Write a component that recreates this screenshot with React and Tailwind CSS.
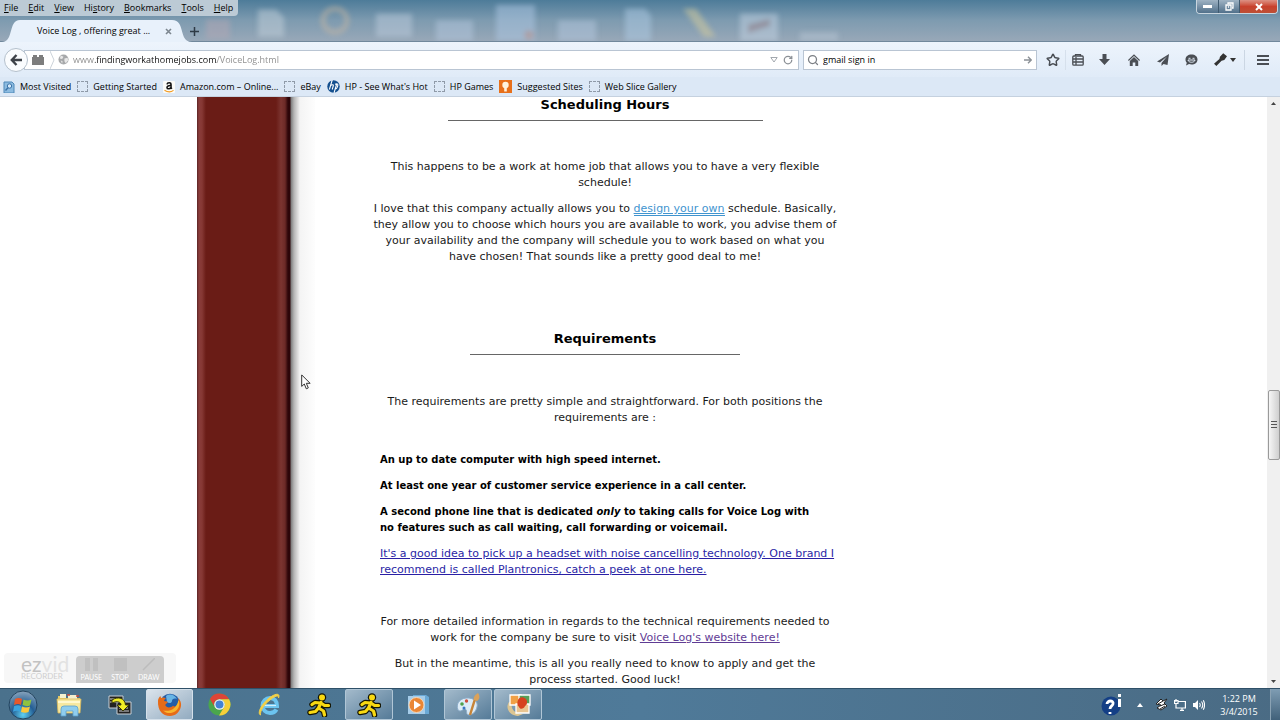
import React, { useState } from 'react';
import { Search, RotateCw, Star } from 'lucide-react';

const MENUS = [
  ['', 'F', 'ile'],
  ['', 'E', 'dit'],
  ['', 'V', 'iew'],
  ['Hi', 's', 'tory'],
  ['', 'B', 'ookmarks'],
  ['', 'T', 'ools'],
  ['', 'H', 'elp'],
];

function BlankIcon() {
  return <span className="w-[11px] h-[11px] shrink-0 border border-dashed border-[#8f9aa8]" />;
}

function VisitedIcon() {
  return (
    <svg className="w-3 h-3 shrink-0" viewBox="0 0 12 12">
      <path d="M1 1h8l2 2v9H1z" fill="#8cbbe0" stroke="#4f88b8" strokeWidth="1" />
      <circle cx="6.5" cy="5" r="2.2" fill="#d6eafa" stroke="#3a72a8" />
      <path d="M5 6.8 2.5 9.5" stroke="#3a72a8" strokeWidth="1.4" />
    </svg>
  );
}

function AmazonIcon() {
  return (
    <svg className="w-3 h-3 shrink-0" viewBox="0 0 12 12">
      <rect width="12" height="12" rx="1" fill="#fbfbf8" />
      <path d="M4 3.4C4.4 1.2 8 1.2 8 3.4v3.4l.9 1M8 4.6C5.6 4.4 4 5 4 6.4c0 1.8 3 1.9 4-.1" fill="none" stroke="#111" strokeWidth="1.6" />
      <path d="M1.5 9.2c3 2 6.5 2 9 .2" fill="none" stroke="#f29a1f" strokeWidth="1.1" />
    </svg>
  );
}

function HpIcon() {
  return (
    <svg className="w-[13px] h-[13px] shrink-0" viewBox="0 0 13 13">
      <circle cx="6.5" cy="6.5" r="6.2" fill="#14508f" />
      <path d="M5.2 0 2.4 9.5M4 5.2c2-1 2.6-.4 2.2 1L5.2 9.5M9.8 3.6 7 13M8 4.2c2.8-.8 3.3-.2 2.5 2.4-.6 2.2-1 2.6-2.8 2.2" fill="none" stroke="#fff" strokeWidth="1.1" />
    </svg>
  );
}

function SuggestedIcon() {
  return (
    <svg className="w-[13px] h-[13px] shrink-0" viewBox="0 0 13 13">
      <rect width="13" height="13" fill="#e8701a" />
      <circle cx="6.5" cy="5" r="3.2" fill="#fff3dc" />
      <path d="M5.2 7h2.6v4.5H5.2z" fill="#fff3dc" />
    </svg>
  );
}

const BOOKMARKS = [
  ['Most Visited', VisitedIcon],
  ['Getting Started', BlankIcon],
  ['Amazon.com – Online...', AmazonIcon],
  ['eBay', BlankIcon],
  ["HP - See What's Hot", HpIcon],
  ['HP Games', BlankIcon],
  ['Suggested Sites', SuggestedIcon],
  ['Web Slice Gallery', BlankIcon],
];

// Desktop icons showing through the glass title bar
function GlassBackdrop() {
  return (
    <svg className="absolute inset-0 w-full h-full" viewBox="0 0 1280 42" preserveAspectRatio="none" aria-hidden="true">
      <defs>
        <filter id="soft" x="-20%" y="-20%" width="140%" height="140%">
          <feGaussianBlur stdDeviation="2.5" />
        </filter>
      </defs>
      <g filter="url(#soft)" opacity="0.5">
        <path d="M206 20h24v20h-24z" fill="#b3a7b4" />
        <path d="M258 10h18l8 8v20h-26z" fill="#c3d0da" />
        <circle cx="335" cy="21" r="12" fill="none" stroke="#c9b7a2" strokeWidth="5" />
        <path d="M376 14h36v24h-36z" fill="#bccbdc" />
        <path d="M436 21h37v21h-37z" fill="#b4c7de" />
        <path d="M496 5h39v37h-39z" fill="#aec8e4" />
        <circle cx="529" cy="36" r="5" fill="#c69c98" />
        <path d="M558 21h38v21h-38z" fill="#b4c7de" />
        <path d="M625 9h20l6 7v26h-26z" fill="#aecbe4" />
        <path d="M683 9 696 9 716 38 704 38z" fill="#d6cc9c" />
        <path d="M740 14h38v28h-38z" fill="#c2d2e2" />
        <path d="M748 25 770 19v8l-22 7z" fill="#a58c94" />
        <path d="M800 33h38v9h-38z" fill="#b7c6d4" />
      </g>
    </svg>
  );
}

function TitleBar() {
  return (
    <header className="relative h-[42px] shrink-0 border-b border-[#71889c] bg-linear-to-b from-[#4d7c99] via-[#7e9bb0] to-[#98a8b8]">
      <GlassBackdrop />
      <div className="relative flex justify-between items-start">
        <nav className="flex h-4 w-[238px] items-center gap-[10px] pl-1 rounded-br bg-[#bccad5] text-[9px] text-black">
          {MENUS.map(([before, key, after]) => (
            <button key={before + key + after} type="button" className="whitespace-nowrap">
              {before}<u>{key}</u>{after}
            </button>
          ))}
        </nav>
        <div className="flex mr-[2px] h-[14px] rounded-b border border-t-0 border-[#c9d5de] overflow-hidden">
          <button type="button" aria-label="Minimize" className="w-[22px] flex items-center justify-center bg-linear-to-b from-[#9fb3c4] to-[#52718b] border-r border-[#3f5a70]">
            <span className="w-[9px] h-[3px] bg-white" />
          </button>
          <button type="button" aria-label="Restore" className="w-[21px] flex items-center justify-center bg-linear-to-b from-[#9fb3c4] to-[#52718b] border-r border-[#3f5a70]">
            <svg className="w-[9px] h-[9px]" viewBox="0 0 9 9" fill="none" stroke="#fff" strokeWidth="1.3">
              <path d="M3 2V1h5v5H7M1 3h5v5H1zM3 5h1" />
            </svg>
          </button>
          <button type="button" aria-label="Close window" className="w-[37px] flex items-center justify-center bg-linear-to-b from-[#dc9184] via-[#c8412d] to-[#bd4f35]">
            <svg className="w-2 h-2" viewBox="0 0 8 8" stroke="#fff" strokeWidth="2">
              <path d="m1 1 6 6M7 1 1 7" />
            </svg>
          </button>
        </div>
      </div>
      <div className="relative flex h-[22px] mt-[4px] items-center">
        <svg className="absolute left-0 top-0 w-[194px] h-[22px]" viewBox="0 0 194 22" aria-hidden="true">
          <path d="M2 22C14 22 8 0 20 0H172C186 0 178 22 192 22z" fill="#e8f1fb" />
        </svg>
        <div className="relative flex w-[184px] items-center justify-between pl-[37px] pr-3">
          <span className="text-[9px] text-black whitespace-nowrap">Voice Log , offering great ...</span>
          <button type="button" aria-label="Close tab" className="flex">
            <svg className="w-[7px] h-[7px]" viewBox="0 0 7 7" stroke="#7c868f" strokeWidth="1.6">
              <path d="m1 1 5 5M6 1 1 6" />
            </svg>
          </button>
        </div>
        <button type="button" aria-label="New tab" className="relative flex ml-[6px]">
          <svg className="w-[9px] h-[9px]" viewBox="0 0 9 9" stroke="#2e3a45" strokeWidth="1.5">
            <path d="M4.5 0v9M0 4.5h9" />
          </svg>
        </button>
      </div>
    </header>
  );
}

function ToolButton({ label, children, className }) {
  return (
    <button type="button" aria-label={label} className={`flex items-center justify-center h-5 text-[#4a4e54] ${className}`}>
      {children}
    </button>
  );
}

function NavBar() {
  const [url, setUrl] = useState('www.findingworkathomejobs.com/VoiceLog.html');
  const [query, setQuery] = useState('gmail sign in');

  return (
    <div className="flex h-[35px] shrink-0 items-center pl-1 pr-[11px] bg-linear-to-b from-[#edf4fc] to-[#e0ebf8]">
      <button type="button" aria-label="Back" className="relative z-10 flex w-6 h-6 shrink-0 items-center justify-center rounded-full border border-[#b4c0cc] bg-[#fafcfe]">
        <svg className="w-3 h-3" viewBox="0 0 12 12" fill="none" stroke="#3d4248" strokeWidth="2.4">
          <path d="M6.5 1 1.8 6l4.7 5M2 6h10" />
        </svg>
      </button>
      <div className="-ml-1 flex h-5 flex-1 items-center border border-[#b9c5d3] bg-white">
        <span className="flex h-full w-[25px] items-center pl-[7px]">
          <svg className="w-3 h-[10px]" viewBox="0 0 12 10" fill="#7d7d7d">
            <path d="M0 2h1V0h4v2h2V0h4v2h1v8H0z" />
          </svg>
        </span>
        <svg className="h-full w-[5px]" viewBox="0 0 5 18" fill="none" stroke="#ccd3da">
          <path d="m0 0 4 9-4 9" />
        </svg>
        <svg className="w-[11px] h-[11px] ml-[3px]" viewBox="0 0 12 12">
          <circle cx="6" cy="6" r="5.5" fill="#a6a8aa" />
          <path d="M3 1.5 6 3 4.5 5.5 2 5zM7 5l3.5-1 .5 3-2.5 3L7 8zM3 7l2 1-.5 2.5z" fill="#e8e8e8" />
        </svg>
        <input
          type="text"
          aria-label="Address"
          value={url}
          onChange={(e) => setUrl(e.target.value)}
          className="ml-[4px] min-w-0 flex-1 h-full text-[9px] bg-clip-text text-transparent caret-black focus:outline-none
                     bg-[linear-gradient(90deg,#8c8c8c_22px,#111_22px,#111_144px,#8c8c8c_144px)]"
        />
        <ToolButton label="Show history" className="w-4">
          <svg className="w-2 h-[6px]" viewBox="0 0 8 6" fill="none" stroke="#a2a8ae">
            <path d="M.8.5h6.4L4 5z" />
          </svg>
        </ToolButton>
        <ToolButton label="Reload" className="w-3 mr-1">
          <RotateCw className="w-[10px] h-[10px] text-[#8b9096]" strokeWidth={3} />
        </ToolButton>
      </div>
      <div className="ml-1 flex h-5 w-[234px] items-center border border-[#b9c5d3] bg-white">
        <Search className="w-3 h-3 ml-[3px] text-[#7b7f84]" strokeWidth={2.5} />
        <input
          type="text"
          aria-label="Search"
          value={query}
          onChange={(e) => setQuery(e.target.value)}
          className="ml-1 min-w-0 flex-1 h-full text-[9px] text-black focus:outline-none"
        />
        <ToolButton label="Go" className="w-4">
          <svg className="w-2 h-2" viewBox="0 0 8 8" fill="none" stroke="#8b9096" strokeWidth="1.4">
            <path d="M0 4h7M4 .8 7.2 4 4 7.2" />
          </svg>
        </ToolButton>
      </div>
      <div className="ml-1 flex items-center">
        <ToolButton label="Bookmark this page" className="w-[25px] border-r border-[#d6e0ec]">
          <Star className="w-[14px] h-[14px]" strokeWidth={2.5} />
        </ToolButton>
        <ToolButton label="Bookmarks list" className="w-6">
          <svg className="w-3 h-3" viewBox="0 0 12 12" fill="none" stroke="currentColor" strokeWidth="1.3">
            <rect x=".8" y="2" width="10.4" height="9.2" rx="1" />
            <path d="M3.5 2V.7h5V2M1 5h10M1 8h10M4 3v8" />
          </svg>
        </ToolButton>
        <ToolButton label="Downloads" className="w-[29px]">
          <svg className="w-[11px] h-3" viewBox="0 0 11 12" fill="currentColor">
            <path d="M3.5 0h4v5H11l-5.5 6L0 5h3.5z" />
          </svg>
        </ToolButton>
        <ToolButton label="Home" className="w-[29px]">
          <svg className="w-3 h-3" viewBox="0 0 12 12" fill="currentColor">
            <path d="M6 .3 12 6l-.8.9L6 2 .8 6.9 0 6z" />
            <path d="M6 3 10.2 7v5H7.3V8.5H4.7V12H1.8V7z" />
          </svg>
        </ToolButton>
        <ToolButton label="Share" className="w-[29px]">
          <svg className="w-3 h-3" viewBox="0 0 12 12" fill="currentColor">
            <path d="M12 0 0 7.5l3 1L10 2.5 4.5 9v3l2-2 4 1z" />
          </svg>
        </ToolButton>
        <ToolButton label="Chat" className="w-[29px]">
          <svg className="w-[13px] h-3" viewBox="0 0 13 12">
            <path d="M6.5.5c3.5 0 6 2 6 5s-2.500 5-6 5c-1 0-1.700-.1-2.500-.4L1 11.500l.8-2.800C.9 7.800.5 6.800.5 5.500c0-3 2.500-5 6-5z" fill="currentColor" />
            <path d="M3 6h7c-.3 3-6.700 3-7 0zM3.500 4.300h2M7.500 4.300h2" fill="none" stroke="#e3edf8" />
          </svg>
        </ToolButton>
        <ToolButton label="Tools" className="w-[38px] gap-[3px]">
          <svg className="w-[13px] h-[13px]" viewBox="0 0 12 12" fill="#333">
            <path d="m5.5 3.500 3-3.300L12 3 9.500 6.500 7 7.200 2.200 12 0 10 5 5.500z" />
          </svg>
          <svg className="w-[6px] h-[4px]" viewBox="0 0 6 4" fill="#333"><path d="M0 0h6L3 4z" /></svg>
        </ToolButton>
        <ToolButton label="Open menu" className="w-[25px] justify-end border-l border-[#cbd6e3]">
          <svg className="w-3 h-3" viewBox="0 0 12 12" stroke="currentColor" strokeWidth="2">
            <path d="M0 2h12M0 6h12M0 10h12" />
          </svg>
        </ToolButton>
      </div>
    </div>
  );
}

function BookmarksBar() {
  return (
    <nav className="flex h-5 shrink-0 items-center gap-[6px] pl-[3px] border-b border-[#c5d1df] bg-[#dce8f6] text-[9px] text-black">
      {BOOKMARKS.map(([label, Icon]) => (
        <a key={label} href="#" className="flex items-center gap-[5px] whitespace-nowrap">
          <Icon />
          {label}
        </a>
      ))}
    </nav>
  );
}

function Article() {
  return (
    <article className="w-[466px] shrink-0 text-[11px] leading-4 text-[#1a1a1a] text-center font-['DejaVu_Sans',Verdana,sans-serif]">
      <h2 className="text-[13px] leading-4 font-bold text-black">Scheduling Hours</h2>
      <hr className="mt-[7px] mx-auto w-[315px] border-[#666]" />
      <div className="mt-[38px] space-y-[10px]">
        <p>This happens to be a work at home job that allows you to have a very flexible schedule!</p>
        <p>
          I love that this company actually allows you to{' '}
          <a href="#" className="text-[#3f94cf] underline border-b border-[#3f94cf]">design your own</a>{' '}
          schedule. Basically, they allow you to choose which hours you are available to work, you advise them of
          your availability and the company will schedule you to work based on what you have chosen! That sounds
          like a pretty good deal to me!
        </p>
      </div>

      <h2 className="mt-[66px] text-[13px] leading-4 font-bold text-black">Requirements</h2>
      <hr className="mt-[7px] mx-auto w-[270px] border-[#666]" />
      <p className="mt-[39px]">
        The requirements are pretty simple and straightforward. For both positions the requirements are :
      </p>
      <div className="mt-[26px] pl-2 space-y-[10px] text-left text-black">
        <div className="space-y-[10px] pr-5 text-[10px] leading-4 font-bold">
          <p>An up to date computer with high speed internet.</p>
          <p>At least one year of customer service experience in a call center.</p>
          <p>
            A second phone line that is dedicated <em>only</em> to taking calls for Voice Log with no features such
            as call waiting, call forwarding or voicemail.
          </p>
        </div>
        <p>
          <a href="#" className="text-[#2a1fa5] underline">
            It&apos;s a good idea to pick up a headset with noise cancelling technology. One brand I recommend is
            called Plantronics, catch a peek at one here.
          </a>
        </p>
      </div>
      <div className="mt-[36px] space-y-[10px]">
        <p>
          For more detailed information in regards to the technical requirements needed to work for the company be
          sure to visit <a href="#" className="text-[#5f3c94] underline">Voice Log&apos;s website here!</a>
        </p>
        <p>But in the meantime, this is all you really need to know to apply and get the process started. Good luck!</p>
      </div>
    </article>
  );
}

function Recorder() {
  return (
    <div className="absolute left-1 bottom-[5px] flex h-[30px] w-[172px] rounded bg-[#f7f7f7] pl-[17px] font-[Lato,sans-serif]">
      <div className="w-[55px] pt-[3px] leading-none">
        <div className="text-[21px] leading-[16px] text-[#c2c2c2]">ez<span className="text-[#e2e2e2]">vid</span></div>
        <div className="text-[8px] leading-[8px] text-[#cfcfcf]">RECORDER</div>
      </div>
      <div className="mt-[3px] flex w-[88px] justify-around rounded-t bg-[#cdcdcd] text-[7px] leading-[8px] text-white">
        <button type="button" className="flex flex-col items-center gap-[2px] pt-[2px]">
          <svg className="w-[13px] h-[13px]" viewBox="0 0 13 13" fill="#c0c0c0"><path d="M0 0h5v13H0zM8 0h5v13H8z" /></svg>
          PAUSE
        </button>
        <button type="button" className="flex flex-col items-center gap-[2px] pt-[2px]">
          <svg className="w-[13px] h-[13px]" viewBox="0 0 13 13" fill="#c0c0c0"><path d="M0 0h13v13H0z" /></svg>
          STOP
        </button>
        <button type="button" className="flex flex-col items-center gap-[2px] pt-[2px]">
          <svg className="w-[13px] h-[13px]" viewBox="0 0 13 13" stroke="#bcbcbc" strokeWidth="1.5"><path d="M13 0 1 12" /></svg>
          DRAW
        </button>
      </div>
    </div>
  );
}

function Scrollbar() {
  return (
    <div className="flex w-[13px] shrink-0 flex-col items-center justify-between bg-[#f0f0f0] py-[5px]">
      <svg className="w-[5px] h-[3px]" viewBox="0 0 5 3" fill="#444"><path d="M0 3h5L2.5 0z" /></svg>
      <div className="mt-16 flex h-[70px] w-3 items-center justify-center rounded-xs border border-[#9a9a9a] bg-linear-to-r from-[#f6f6f6] to-[#cfcfcf]">
        <svg className="w-[6px] h-[7px]" viewBox="0 0 6 7" stroke="#555"><path d="M0 .5h6M0 3.5h6M0 6.5h6" /></svg>
      </div>
      <svg className="w-[5px] h-[3px]" viewBox="0 0 5 3" fill="#444"><path d="M0 0h5L2.5 3z" /></svg>
    </div>
  );
}

function RunningMan() {
  return (
    <svg className="w-6 h-6" viewBox="0 0 24 24" strokeLinecap="round" strokeLinejoin="round" fill="none">
      <g stroke="#151505" strokeWidth="5.5">
        <path d="M14 9.5 11.5 15M13.5 10 8 9.5 5 11.5M14 10l3.5 2.5h4M11.5 15 8.5 18.5 3 19.5M11.5 15l5 3 1 4" />
      </g>
      <circle cx="15" cy="4.5" r="4.2" fill="#151505" />
      <g stroke="#f8d912" strokeWidth="3.2">
        <path d="M14 9.5 11.5 15M13.5 10 8 9.5 5 11.5M14 10l3.5 2.5h4M11.5 15 8.5 18.5 3 19.5M11.5 15l5 3 1 4" />
      </g>
      <circle cx="15" cy="4.5" r="3" fill="#f8d912" />
    </svg>
  );
}

function ExplorerIcon() {
  return (
    <svg className="w-[27px] h-6" viewBox="0 0 27 24">
      <path d="M2 3h7l1 2h14v14H2z" fill="#e5c765" />
      <path d="M4 1h6v4H4zM12 2h9v4h-9z" fill="#f3f0d0" />
      <path d="M11 2h3M20 3h3" stroke="#c6483a" strokeWidth="1.5" />
      <path d="M1 6h24l-1 14H2z" fill="#f7e8a0" stroke="#d8b85a" strokeWidth=".8" />
      <path d="M2 9h22" stroke="#fff8cf" strokeWidth="2" />
      <path d="M5 23v-7q0-3 3-3h11q3 0 3 3v7h-5v-5h-7v5z" fill="#8fcdee" stroke="#5b9fc9" strokeWidth=".8" />
    </svg>
  );
}

function TransferIcon() {
  return (
    <svg className="w-6 h-5" viewBox="0 0 24 20">
      <path d="M1 1h14v12H1z" fill="#222" stroke="#cbd1d6" />
      <path d="M2 4h8M2 7h8" stroke="#d9d9d9" />
      <path d="M9 7h14v12H9z" fill="#222" stroke="#cbd1d6" />
      <path d="M11 16h10M11 13h9" stroke="#cfcfcf" />
      <path d="M4 5c6-4 13-2 13.5 5H21l-6 6-6-6h4c0-3-3.5-4.5-9-2z" fill="#f1ee26" stroke="#3b3a08" />
    </svg>
  );
}

function FirefoxIcon() {
  return (
    <svg className="w-[25px] h-6" viewBox="0 0 25 24">
      <circle cx="13" cy="10.5" r="9.8" fill="#245da8" />
      <path d="M9 3c4-3 9-1 11 3-3-1-5 0-5 2s-3 3-5 1z" fill="#68b5e5" />
      <path d="M1 8c0-2 1-4 2.5-5 0 1 .3 1.6.8 2 1.6-1 3.2-.7 4.7.3-1.2.6-1.8 1.5-1.8 2.7 1 .2 3 .3 3.5 1-.3 1.5-2 1.7-2.5 3 1.2 3.2 5.5 3 7.8.8 1.8 1.6 4.5.2 5-2.3 1-2 .7-4-.2-5.5 2.5 1.7 3.7 5 3.2 8-1 6-5.5 10-11 10C5.500 23 .5 17.500 1 8z" fill="#e66b18" />
      <path d="M21.5 7c2.500 5-.5 12-7.500 13-3 .4-6-.6-8-2.500 7 1.500 13.500-1.500 15.500-10.500z" fill="#f8b52d" />
    </svg>
  );
}

function ChromeIcon() {
  return (
    <svg className="w-[23px] h-[23px]" viewBox="0 0 24 24">
      <circle cx="12" cy="12" r="11.5" fill="#4aa64c" />
      <path d="M2 6.2A11.5 11.5 0 0 1 22 6.5H12A5.5 5.5 0 0 0 7 14.5z" fill="#dc4437" />
      <path d="M22 6.5A11.5 11.5 0 0 1 11.5 23.5l5.3-9A5.5 5.5 0 0 0 12 6.5z" fill="#f6ce3a" />
      <circle cx="12" cy="12" r="5.5" fill="#f4f4f4" />
      <circle cx="12" cy="12" r="4.2" fill="#4382d6" />
    </svg>
  );
}

function ExplorerE() {
  return (
    <svg className="w-6 h-6" viewBox="0 0 24 24" fill="none">
      <path d="M6 13h14c0-5-2.8-8-7-8s-7.5 3.2-7.5 7.5S8.8 20 13 20c3 0 5.2-1.2 6.5-3.5" stroke="#6cc4f0" strokeWidth="4" />
      <path d="M7 12.5h12" stroke="#d2effc" strokeWidth="1.2" />
      <path d="M3.5 22C-1 20 7 7 16 2.5c5-2.5 7-1 5.5 2.5C22 1.5 18 3 13 7 6.5 12 3 18 3.5 22z" fill="#f2d049" stroke="#f2d049" />
    </svg>
  );
}

function MediaIcon() {
  return (
    <svg className="w-[21px] h-5" viewBox="0 0 21 20">
      <path d="M5 0h13l3 2v17H5z" fill="#6aa9d6" />
      <path d="M0 1h17v18H0z" fill="#a6cdea" />
      <circle cx="8.5" cy="10" r="7.5" fill="#ea8635" stroke="#f6d7b6" />
      <path d="m6 5.5 7 4.5-7 4.5z" fill="#fff" />
    </svg>
  );
}

function PaintIcon() {
  return (
    <svg className="w-[25px] h-6" viewBox="0 0 25 24">
      <path d="M2 17C-1 10 5 4 13 5c7 1 9 5 8 9-1 5-5 8-8 8-4 0-1-5-4-6-2-.6-4 4-7 1z" fill="#dcebf6" stroke="#89aac7" />
      <circle cx="6" cy="11" r="1.8" fill="#4f9f4b" />
      <circle cx="10.5" cy="8" r="1.7" fill="#cf4d3b" />
      <circle cx="8" cy="15" r="1.5" fill="#3b77c3" />
      <path d="m14 22 5-16" stroke="#c68438" strokeWidth="2.5" />
      <path d="M18 7c-1-3 1-5 4-7 2 3 2 6-1 8z" fill="#dba25a" />
    </svg>
  );
}

function PhotosIcon() {
  return (
    <svg className="w-[25px] h-6" viewBox="0 0 25 24">
      <path d="M3 9c-4 6 0 13 9 14l5-2C9 21 4 16 6 9z" fill="#dcc592" />
      <path d="M4 2h11v10H4z" fill="#f0a046" stroke="#fff" strokeWidth="1.3" />
      <path d="M13 2h11v10H13z" fill="#57a05a" stroke="#fff" strokeWidth="1.3" />
      <path d="M10 11h13v9H10z" fill="#e9c592" stroke="#fff" strokeWidth="1.3" />
      <path d="M12 7c1-3 5-4 8-1 2 3 1 6-1 7-1 3-5 4-6 1-2-2-2-4-1-7z" fill="#d6421f" />
    </svg>
  );
}

const TASKS = [
  ['Windows Explorer', ExplorerIcon, false],
  ['File transfer', TransferIcon, false],
  ['Firefox', FirefoxIcon, true],
  ['Chrome', ChromeIcon, false],
  ['Internet Explorer', ExplorerE, false],
  ['AIM', RunningMan, false],
  ['AIM buddy list', RunningMan, true],
  ['Media Player', MediaIcon, false],
  ['Paint', PaintIcon, true],
  ['Photos', PhotosIcon, true],
];

function Taskbar() {
  return (
    <footer className="flex h-8 shrink-0 items-center border-t border-[#2f5068] bg-linear-to-r from-[#4a718c] via-[#4f7a99] to-[#4a6b84]">
      <button type="button" aria-label="Start" className="flex w-[46px] justify-center">
        <svg className="w-[30px] h-[30px]" viewBox="0 0 30 30">
          <defs>
            <radialGradient id="orb" cx=".5" cy=".85" r=".8">
              <stop offset="0" stopColor="#5ed0f2" />
              <stop offset=".5" stopColor="#245e94" />
              <stop offset="1" stopColor="#7f9db8" />
            </radialGradient>
          </defs>
          <circle cx="15" cy="15" r="14" fill="url(#orb)" stroke="#24455f" />
          <path d="M7 9q4-2 7 0l-1 6q-3-2-7 0z" fill="#e8582a" />
          <path d="M15.5 9.5q4 2 8 0l-1.5 6q-3 1.5-7.5-.5z" fill="#8fc23f" />
          <path d="M6 16.3q4-2 7 0l-1 5.5q-3-2-7 0z" fill="#3da3dd" />
          <path d="M14 16.5q4 2 8 0l-1.5 5.5q-3 1.5-7.5 0z" fill="#fbc83b" />
        </svg>
      </button>
      <div className="grid h-full w-[496px] grid-cols-10 gap-[2px]">
        {TASKS.map(([label, Icon, open]) => (
          <button
            key={label}
            type="button"
            aria-label={label}
            className={`flex items-center justify-center rounded-xs border
                       ${label === 'Firefox'
                         ? 'border-[#d4e0ea] bg-linear-to-br from-[#dbe4ec] to-[#92abc0]'
                         : open
                           ? 'border-[#b0c6d6] bg-linear-to-br from-[#a3bacb] to-[#557b98]'
                           : 'border-transparent'}`}
          >
            <Icon />
          </button>
        ))}
      </div>
      <div className="ml-auto flex h-full items-center text-white">
        <svg className="w-6 h-6 mr-3" viewBox="0 0 24 24">
          <circle cx="10" cy="13" r="9.5" fill="#143f86" />
          <path d="M6 11c0-4 7-4 6 0-.5 2-3 2-3 5M9 19v2" fill="none" stroke="#fff" strokeWidth="2.8" />
          <path d="M18.5 6v8M18.5 1v3" stroke="#fff" strokeWidth="3" />
        </svg>
        <svg className="w-[6px] h-[4px] mr-3" viewBox="0 0 6 4" fill="#fff"><path d="M0 4h6L3 0z" /></svg>
        <svg className="w-[13px] h-[13px] mr-[6px]" viewBox="0 0 13 13">
          <path d="M1 6 6 1l2 2 4-2-3 4 3 3-6 4-4-2 4-3z" fill="#fff" stroke="#222" strokeWidth="1" />
          <path d="m3 6 5-3M5 8l5-2M5 11l5-3" stroke="#222" />
        </svg>
        <svg className="w-3 h-3 mr-[7px]" viewBox="0 0 12 12" fill="none" stroke="#fff" strokeWidth="1.2">
          <path d="M4 2.5h7.4v6.5H4M6 11.4h4M8 9v2M2 0v3M.5 1.5h3.5v3H.5zM2 4.5V9h2" />
        </svg>
        <svg className="w-3 h-3" viewBox="0 0 12 12" fill="none" stroke="#fff" strokeWidth="1.1">
          <path d="M0 4h2l3-3v10L2 8H0z" fill="#fff" stroke="none" />
          <path d="M6.5 4q1.5 2 0 4M8.5 2.5q2.5 3.5 0 7M10.3 1.2q2.5 4.8 0 9.6" />
        </svg>
        <time className="ml-2 w-[52px] text-center text-[9px] leading-[13px]">
          1:22 PM<br />3/4/2015
        </time>
        <button type="button" aria-label="Show desktop" className="ml-[5px] h-full w-[10px] border-l border-[#8aa2b3] bg-linear-to-b from-[#7f9db3] to-[#41617a]" />
      </div>
    </footer>
  );
}

function App() {
  return (
    <div className="flex h-screen flex-col overflow-hidden bg-white font-['Open_Sans',sans-serif]">
      <TitleBar />
      <NavBar />
      <BookmarksBar />
      <div className="relative flex min-h-0 flex-1">
        <main className="flex-1 overflow-hidden bg-white">
          <div className="mx-auto flex h-full max-w-[873px]">
            <div className="mr-[57px] w-[118px] shrink-0 bg-[linear-gradient(90deg,#5a2424_0px,#8a3c3a_2px,#863834_5px,#6a1c16_9px,#6a1c16_79px,#7b3430_84px,#6c2a27_88px,#2c0509_91px,#2c0509_93px,#7c7c7c_94px,#b5b5b5_97px,#f4f4f4_103px,#fdfdfd_118px)]" />
            <Article />
          </div>
        </main>
        <Scrollbar />
        <Recorder />
        <svg className="absolute left-[301px] top-[277px] w-[10px] h-4" viewBox="0 0 10 16">
          <path d="M.7.9v11.5l2.6-2.4 2 4.8 2-.9-2-4.6h3.8z" fill="#fff" stroke="#333" />
        </svg>
      </div>
      <Taskbar />
    </div>
  );
}

export default App;
